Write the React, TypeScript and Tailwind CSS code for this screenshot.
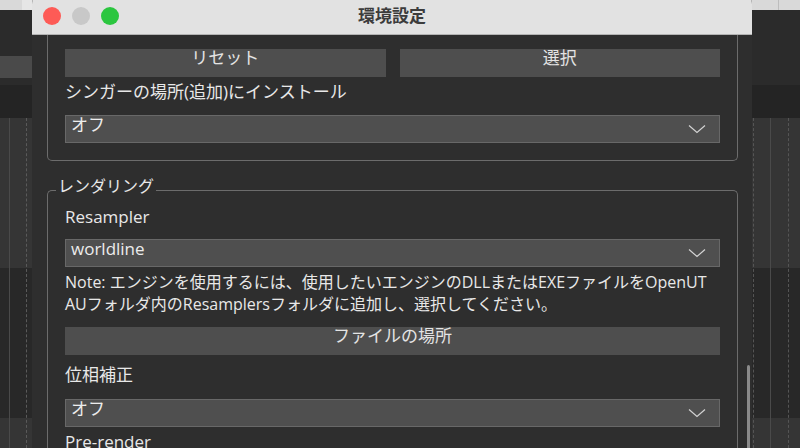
import React from 'react';

const font = { fontFamily: '"Open Sans", "Noto Sans CJK JP", sans-serif' };

const Chevron = () => (
    <svg width="18" height="10" viewBox="0 0 18 10" fill="none">
        <polyline points="1,1.5 9,8.5 17,1.5" stroke="#d2d2d2" strokeWidth="1.2" />
    </svg>
);

const Select = ({ value, className = '' }: { value: string; className?: string }) => (
    <div className={`flex h-[28px] items-center justify-between border border-[#686868] bg-[#4f4f4f] pr-[13px] ${className}`}>
        <span className="self-start pl-[5px] text-[17px] leading-[17px] text-[#ececec]">{value}</span>
        <Chevron />
    </div>
);

const Button = ({ label, className = '' }: { label: string; className?: string }) => (
    <div className={`h-[28px] bg-[#4e4e4e] text-center text-[17px] leading-[17px] text-[#e4e4e4] ${className}`}>
        {label}
    </div>
);

const Label = ({ text, className = '' }: { text: string; className?: string }) => (
    <div className={`h-[22px] text-[17px] leading-[22px] text-[#e8e8e8] ${className}`}>{text}</div>
);

export default function App() {
    return (
        <div className="relative h-[448px] w-[800px] overflow-hidden bg-[#2a2a2a]" style={font}>
            {/* Background app */}
            <div className="flex h-full flex-col">
                <div className="flex h-[10px] bg-[#d9d9d9]">
                    <div className="w-[22px]" />
                    <div className="w-[10px] bg-[#e6e6e6]" />
                    <div className="flex-1" />
                    <div className="w-px bg-[#bdbdbd]" />
                    <div className="w-[21px]" />
                </div>
                <div className="h-[46px] bg-[#2b2b2b]" />
                <div className="flex h-[22px]">
                    <div className="w-[32px] bg-[#4a4a4a]" />
                    <div className="flex-1 bg-[#2b2b2b]" />
                </div>
                <div className="h-[7px] bg-[#2b2b2b]" />
                <div className="h-[33px] bg-[#242424]" />
                <div className="relative flex flex-1 flex-col">
                    <div className="h-[150px] bg-[#353535]" />
                    <div className="h-[150px] bg-[#282828]" />
                    <div className="flex-1 bg-[#353535]" />
                    {/* grid lines */}
                    <div className="pointer-events-none absolute inset-0 flex">
                        <div className="w-[9px]" />
                        <div className="w-[17px] border-l border-[#4a4a4a]" />
                        <div className="w-[727px] border-l border-dashed border-[#5a5a5a]" />
                        <div className="w-[17px] border-l border-dashed border-[#555555]" />
                        <div className="w-[18px] border-l border-[#4a4a4a]" />
                        <div className="flex-1 border-l border-dashed border-[#555555]" />
                    </div>
                </div>
            </div>

            {/* Preferences window */}
            <div className="absolute left-[32px] top-[-6px] flex h-[460px] w-[720px] flex-col overflow-hidden rounded-t-[10px] bg-[#2e2e2e]">
                <div className="grid h-[41px] shrink-0 grid-cols-[1fr_auto_1fr] items-center border-b border-[#b3b3b3] bg-[#e2e2e2] pt-[4px]">
                    <div className="flex items-center gap-[11px] pl-[11px]">
                        <span className="h-[18px] w-[18px] rounded-full bg-[#fd5b56]" />
                        <span className="h-[18px] w-[18px] rounded-full bg-[#c8c8c8]" />
                        <span className="h-[18px] w-[18px] rounded-full bg-[#2bc63f]" />
                    </div>
                    <div className="text-[17px] font-bold leading-[22px] text-[#3c3c3c]">環境設定</div>
                    <div />
                </div>

                <div className="relative flex-1 overflow-hidden pl-[15px] pr-[14px]">
                    {/* Installation group (scrolled) */}
                    <div className="rounded-b-[5px] border-x border-b border-[#6c6c6c] px-[17px] pb-[17px] pt-[14px]">
                        <div className="grid grid-cols-2 gap-[14px]">
                            <Button label="リセット" />
                            <Button label="選択" />
                        </div>
                        <Label text="シンガーの場所(追加)にインストール" className="mt-[4px]" />
                        <Select value="オフ" className="mt-[12px]" />
                    </div>

                    {/* Rendering group */}
                    <div className="mt-[14px] flex items-start">
                        <div className="mt-[15px] h-[7px] w-[9px] shrink-0 rounded-tl-[5px] border-l border-t border-[#6c6c6c]" />
                        <span className="px-[2px] text-[16px] leading-[22px] text-[#e8e8e8]">レンダリング</span>
                        <div className="mt-[15px] h-[7px] flex-1 rounded-tr-[5px] border-r border-t border-[#6c6c6c]" />
                    </div>
                    <div className="border-x border-[#6c6c6c] px-[17px] pt-[9px]">
                        <Label text="Resampler" />
                        <Select value="worldline" className="mt-[11px]" />
                        <div className="mt-[4px] text-[16px] leading-[22px] text-[#e8e8e8]">
                            <div className="whitespace-nowrap">Note: エンジンを使用するには、使用したいエンジンのDLLまたはEXEファイルをOpenUT</div>
                            <div className="whitespace-nowrap">AUフォルダ内のResamplersフォルダに追加し、選択してください。</div>
                        </div>
                        <Button label="ファイルの場所" className="mt-[12px]" />
                        <Label text="位相補正" className="mt-[9px]" />
                        <Select value="オフ" className="mt-[13px]" />
                        <Label text="Pre-render" className="mt-[4px]" />
                    </div>

                    {/* scrollbar */}
                    <div className="absolute bottom-0 right-[2px] top-[330px] w-[3px] rounded-full bg-[#8a8a8a]" />
                </div>
            </div>
        </div>
    );
}
